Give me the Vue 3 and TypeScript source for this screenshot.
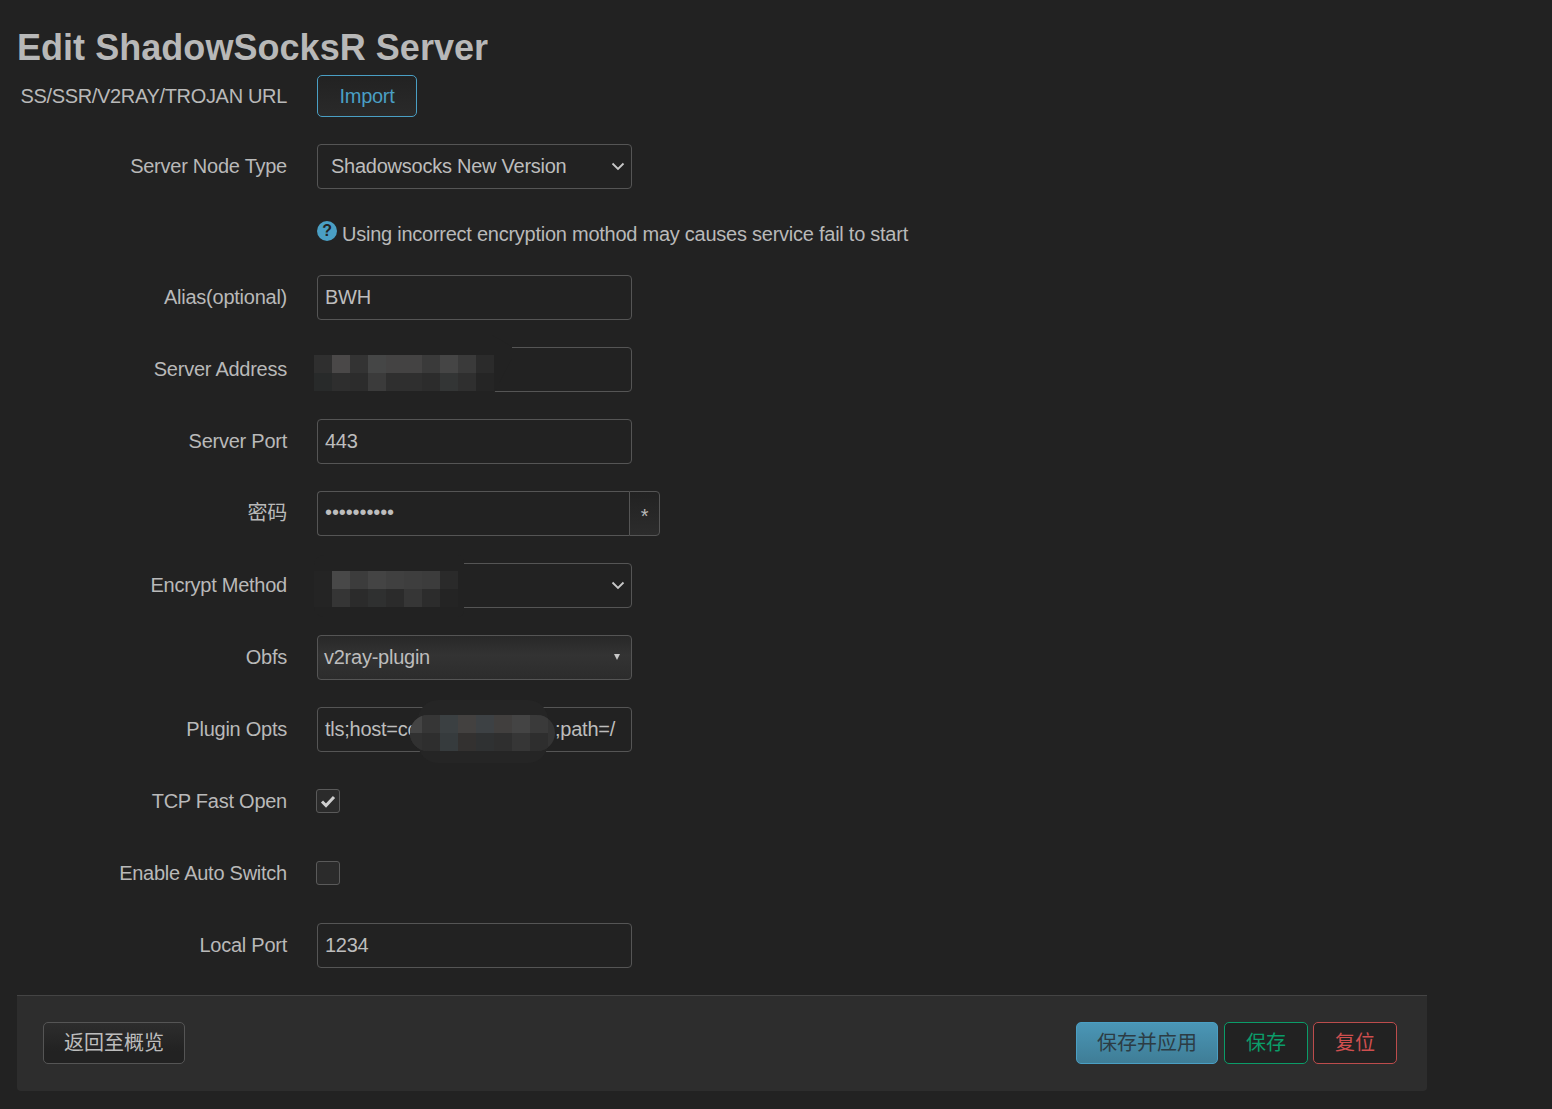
<script setup lang="ts">
interface Mosaic {
  key: string;
  rows: string[][];
}

const serverCells: string[][] = [
  ['#2f2f2f', '#4a4848', '#333333', '#454646', '#444343', '#444343', '#3a3a3a', '#454545', '#3a3a3a', '#2b2b2b'],
  ['#282a2a', '#2e2e2e', '#2c2c2c', '#3b3b3b', '#2f2f2f', '#2f2f2f', '#2c2c2c', '#333535', '#2f2f2f', '#252525'],
];
const methodCells: string[][] = [
  ['#242424', '#484848', '#3c3c3c', '#444444', '#404040', '#3e3e3e', '#3c3c3c', '#2a2a2a'],
  ['#242424', '#353535', '#2b2b2b', '#2f3030', '#2b2b2b', '#363636', '#2c2c2c', '#242424'],
];
const pluginCells: string[][] = [
  ['#444444', '#363636', '#3b4042', '#434140', '#3d4144', '#413f3e', '#444444', '#3a3a3a'],
  ['#313131', '#2e2e2e', '#363b3d', '#333130', '#2f3132', '#2f2f2f', '#363636', '#2e2e2e'],
];

const mosaics: Record<string, Mosaic> = {
  server: { key: 'server', rows: serverCells },
  method: { key: 'method', rows: methodCells },
  plugin: { key: 'plugin', rows: pluginCells },
};
</script>

<template>
  <main class="page">
    <h2 class="title">Edit ShadowSocksR Server</h2>
    <form class="form" @submit.prevent>
      <div class="row row-import">
        <label class="label label-import">SS/SSR/V2RAY/TROJAN URL</label>
        <button type="button" class="btn btn-import">Import</button>
      </div>

      <div class="row">
        <label class="label">Server Node Type</label>
        <div class="field select">
          <span>Shadowsocks New Version</span>
          <svg class="chevron" width="14" height="9" viewBox="0 0 14 9"><path d="M1.5 1.5 7 7l5.5-5.5" fill="none" stroke="#c8c8c8" stroke-width="1.8" /></svg>
        </div>
      </div>

      <div class="row row-note">
        <span class="label"></span>
        <div class="note"><span class="help">?</span><span>Using incorrect encryption mothod may causes service fail to start</span></div>
      </div>

      <div class="row">
        <label class="label">Alias(optional)</label>
        <div class="field">BWH</div>
      </div>

      <div class="row">
        <label class="label">Server Address</label>
        <div class="field-wrap">
          <div class="field"></div>
          <div class="cover cover-server">
            <div v-for="(cells, r) in mosaics.server.rows" :key="r" class="mosaic-row">
              <i v-for="(c, i) in cells" :key="i" class="cell" :style="{ background: c }"></i>
            </div>
          </div>
        </div>
      </div>

      <div class="row">
        <label class="label">Server Port</label>
        <div class="field">443</div>
      </div>

      <div class="row">
        <label class="label">密码</label>
        <div class="password">
          <div class="field field-pass"><span class="dots">••••••••••</span></div>
          <div class="reveal">*</div>
        </div>
      </div>

      <div class="row">
        <label class="label">Encrypt Method</label>
        <div class="field-wrap">
          <div class="field select">
            <svg class="chevron" width="14" height="9" viewBox="0 0 14 9"><path d="M1.5 1.5 7 7l5.5-5.5" fill="none" stroke="#c8c8c8" stroke-width="1.8" /></svg>
          </div>
          <div class="cover cover-method">
            <div v-for="(cells, r) in mosaics.method.rows" :key="r" class="mosaic-row">
              <i v-for="(c, i) in cells" :key="i" class="cell" :style="{ background: c }"></i>
            </div>
          </div>
        </div>
      </div>

      <div class="row">
        <label class="label">Obfs</label>
        <div class="field select obfs">
          <span>v2ray-plugin</span>
          <span class="triangle"></span>
        </div>
      </div>

      <div class="row">
        <label class="label">Plugin Opts</label>
        <div class="field-wrap">
          <div class="field field-plugin"><span>tls;host=co</span><span>;path=/</span></div>
          <div class="halo"></div>
          <div class="cover cover-plugin">
            <div v-for="(cells, r) in mosaics.plugin.rows" :key="r" class="mosaic-row">
              <i v-for="(c, i) in cells" :key="i" class="cell" :style="{ background: c }"></i>
            </div>
          </div>
        </div>
      </div>

      <div class="row">
        <label class="label">TCP Fast Open</label>
        <div class="check">
          <svg width="16" height="14" viewBox="0 0 16 14"><path d="M2 7.5 6 11.5 14 3" fill="none" stroke="#cfcfcf" stroke-width="3" /></svg>
        </div>
      </div>

      <div class="row">
        <label class="label">Enable Auto Switch</label>
        <div class="check"></div>
      </div>

      <div class="row">
        <label class="label">Local Port</label>
        <div class="field">1234</div>
      </div>
    </form>

    <footer class="footer">
      <button type="button" class="btn btn-back">返回至概览</button>
      <div class="actions">
        <button type="button" class="btn btn-apply">保存并应用</button>
        <button type="button" class="btn btn-save">保存</button>
        <button type="button" class="btn btn-reset">复位</button>
      </div>
    </footer>
  </main>
</template>

<style>
html,
body {
  background: #222222;
}
</style>

<style scoped>
.page {
  box-sizing: border-box;
  width: 1552px;
  height: 1109px;
  padding: 0 125px 0 17px;
  background: #222222;
  color: #b9b9b9;
  font-family: "Liberation Sans", Arial, "Noto Sans CJK SC", sans-serif;
  font-size: 20px;
  line-height: 28px;
  letter-spacing: -0.25px;
  overflow: hidden;
}

.title {
  height: 75px;
  margin: 0;
  padding: 27px 0 0 0;
  box-sizing: border-box;
  font-size: 36px;
  line-height: 42px;
  font-weight: 700;
  letter-spacing: 0.04px;
  color: #b8b8b8;
}

.form {
  display: flex;
  flex-direction: column;
  gap: 27px;
}

.row {
  display: flex;
  align-items: center;
  gap: 30px;
  height: 45px;
}

.row-import {
  height: 42px;
}

.row-note {
  height: 32px;
}

.label {
  box-sizing: border-box;
  flex: none;
  width: 270px;
  padding-bottom: 2px;
  text-align: right;
}

.label-import {
  padding-bottom: 0;
  letter-spacing: -0.33px;
}

.field-wrap {
  position: relative;
  width: 315px;
  height: 45px;
}

.field {
  box-sizing: border-box;
  display: flex;
  align-items: center;
  width: 315px;
  height: 45px;
  padding: 0 7px 2px;
  border: 1px solid #555555;
  border-radius: 4px;
  background: #222222;
  color: #bdbdbd;
}

.select {
  justify-content: space-between;
  padding: 0 6px 2px 13px;
}

.chevron {
  display: block;
  margin: 2px 0 0 auto;
}

.obfs {
  padding: 0 11px 2px 6px;
  background: linear-gradient(to bottom, #282828 0%, #333333 45%, #2c2c2c 100%);
}

.triangle {
  width: 0;
  height: 0;
  border-left: 3.5px solid transparent;
  border-right: 3.5px solid transparent;
  border-top: 6px solid #c8c8c8;
}

.note {
  display: flex;
  align-items: center;
  gap: 5px;
  padding-top: 4px;
}

.help {
  display: flex;
  align-items: center;
  justify-content: center;
  width: 20px;
  height: 20px;
  margin-top: -6px;
  border-radius: 50%;
  background: #4a9fc4;
  color: #222222;
  font-size: 16px;
  font-weight: 700;
  line-height: 20px;
}

.password {
  display: flex;
  width: 343px;
  height: 45px;
}

.field-pass {
  width: 313px;
  border-radius: 4px 0 0 4px;
  border-right: 0;
}

.dots {
  font-size: 20px;
  letter-spacing: -0.1px;
  line-height: 1;
  margin-top: -2px;
}

.reveal {
  box-sizing: border-box;
  width: 31px;
  height: 45px;
  border: 1px solid #555555;
  border-radius: 0 4px 4px 0;
  background: linear-gradient(to bottom, #222222, #2c2c2c);
  color: #b9b9b9;
  font-size: 20px;
  line-height: 49px;
  text-align: center;
}

.field-plugin {
  justify-content: space-between;
  padding-right: 16px;
}

.cover {
  position: absolute;
  display: flex;
  flex-direction: column;
  box-sizing: border-box;
  background: #222222;
}

.cover-server {
  left: -3px;
  top: -12px;
  width: 198px;
  height: 58px;
  padding-top: 20px;
  clip-path: polygon(0 0, 90% 0, 100% 20%, 100% 40%, 91% 100%, 0 100%);
}

.cover-method {
  left: -3px;
  top: -8px;
  width: 150px;
  height: 62px;
  padding-top: 16px;
  border-radius: 10px 6px 6px 10px;
}

.halo {
  position: absolute;
  left: 101px;
  top: -7px;
  width: 130px;
  height: 63px;
  border-radius: 20px;
  background: #252525;
}

.cover-plugin {
  left: 93px;
  top: 8px;
  width: 145px;
  height: 36px;
  border-radius: 18px;
  background: #343434;
  overflow: hidden;
}

.cover-plugin .mosaic-row {
  margin-left: -6px;
}

.mosaic-row {
  display: flex;
}

.cell {
  display: block;
  flex: none;
  width: 18px;
  height: 18px;
}

.check {
  box-sizing: border-box;
  display: flex;
  align-items: center;
  justify-content: center;
  width: 24px;
  height: 24px;
  margin: 0 0 2px -1px;
  border: 1px solid #5a5a5a;
  border-radius: 3px;
  background: #2b2b2b;
}

.btn {
  box-sizing: border-box;
  height: 42px;
  margin: 0;
  padding: 0;
  border: 1px solid #555555;
  border-radius: 5px;
  background: linear-gradient(to bottom, #222222, #2a2a2a);
  color: #bdbdbd;
  font-family: inherit;
  font-size: 20px;
  line-height: 28px;
}

.btn-import {
  width: 100px;
  border-color: #4a9fc4;
  color: #4a9fc4;
  letter-spacing: -0.3px;
}

.footer {
  display: flex;
  align-items: flex-start;
  justify-content: space-between;
  box-sizing: border-box;
  height: 96px;
  margin-top: 27px;
  padding: 26px 30px 0 26px;
  border-top: 1px solid #444444;
  border-radius: 0 0 4px 4px;
  background: #2d2d2d;
}

.actions {
  display: flex;
  gap: 5px;
}

.btn-back {
  width: 142px;
  background: linear-gradient(to bottom, #2d2d2d, #222222 70%);
}

.btn-apply {
  width: 142px;
  margin-right: 1px;
  border-color: #4a9fc4;
  background: linear-gradient(to bottom, #4a96b6, #3f7d96);
  color: #2c3c44;
}

.btn-save {
  width: 84px;
  border-color: #0b9c69;
  background: #222222;
  color: #0b9c69;
}

.btn-reset {
  width: 84px;
  border-color: #bd4c4c;
  background: #222222;
  color: #cf4f4f;
}
</style>
